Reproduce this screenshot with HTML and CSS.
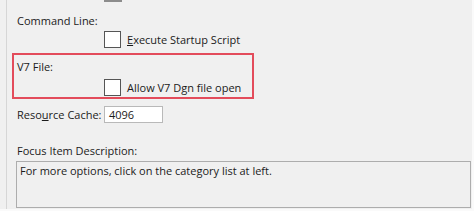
FILE: index.html
```html
<!DOCTYPE html>
<html lang="en">
<head>
  <meta charset="UTF-8" />
  <title>Options</title>
  <link rel="stylesheet" href="styles.css">
</head>
<body>
  <div class="panel">
    <div class="content">
      <div class="stub"></div>
      <div class="label first">Command Line:</div>
      <div class="check-row">
        <span class="checkbox"></span>
        <span class="check-text"><u>E</u>xecute Startup Script</span>
      </div>
      <div class="highlight">
        <div class="label">V7 File:</div>
        <div class="check-row">
          <span class="checkbox"></span>
          <span class="check-text">Allow V7 Dgn file open</span>
        </div>
      </div>
      <div class="field-row">
        <span class="field-label">Reso<u>u</u>rce Cache:</span>
        <span class="textbox">4096</span>
      </div>
      <div class="label focus">Focus Item Description:</div>
      <div class="description">For more options, click on the category list at left.</div>
    </div>
  </div>
</body>
</html>
```

FILE: styles.css
```css
body {
  margin: 0;
  background: #fafafa;
  font-family: "Open Sans", "Noto Sans", sans-serif;
  font-size: 11px;
  color: #1b1b1b;
  white-space: nowrap;
}
.panel {
  width: 472px;
  height: 209px;
  background: #f0f0f0;
  overflow: hidden;
}
.content {
  margin-left: 6px;
  height: 100%;
  border-left: 1px solid #d6d6d6;
}
.stub {
  width: 18px;
  height: 2px;
  margin-left: 97px;
  background: #8c8c8c;
}
.label {
  line-height: 18px;
  height: 18px;
  padding-left: 10px;
}
.label.first {
  margin-top: 10px;
}
.check-row {
  display: flex;
  align-items: center;
  gap: 6px;
  height: 17px;
  margin-left: 97px;
  margin-top: 1px;
}
.checkbox {
  flex-shrink: 0;
  width: 15px;
  height: 15px;
  background: #fff;
  border: 1px solid #555;
}
.check-text {
  line-height: 17px;
}
.highlight {
  margin: 5px 0 0 5px;
  width: 238px;
  border: 2px solid #e34c5b;
  padding: 3px 0 1px;
}
.highlight .label {
  padding-left: 3px;
}
.highlight .check-row {
  margin-left: 90px;
  margin-top: 3px;
}
.field-row {
  display: flex;
  align-items: center;
  height: 17px;
  margin-top: 7px;
  padding-left: 10px;
}
.field-label {
  flex-shrink: 0;
  width: 87px;
}
.textbox {
  box-sizing: border-box;
  flex-shrink: 0;
  width: 59px;
  height: 17px;
  line-height: 15px;
  padding-left: 4px;
  background: #fff;
  border: 1px solid #b9b9b9;
}
.label.focus {
  margin-top: 19px;
}
.description {
  box-sizing: border-box;
  margin: 1px 0 0 9px;
  width: 455px;
  height: 47px;
  padding: 1px 3px;
  line-height: 15px;
  border: 1px solid #adadad;
}
```
